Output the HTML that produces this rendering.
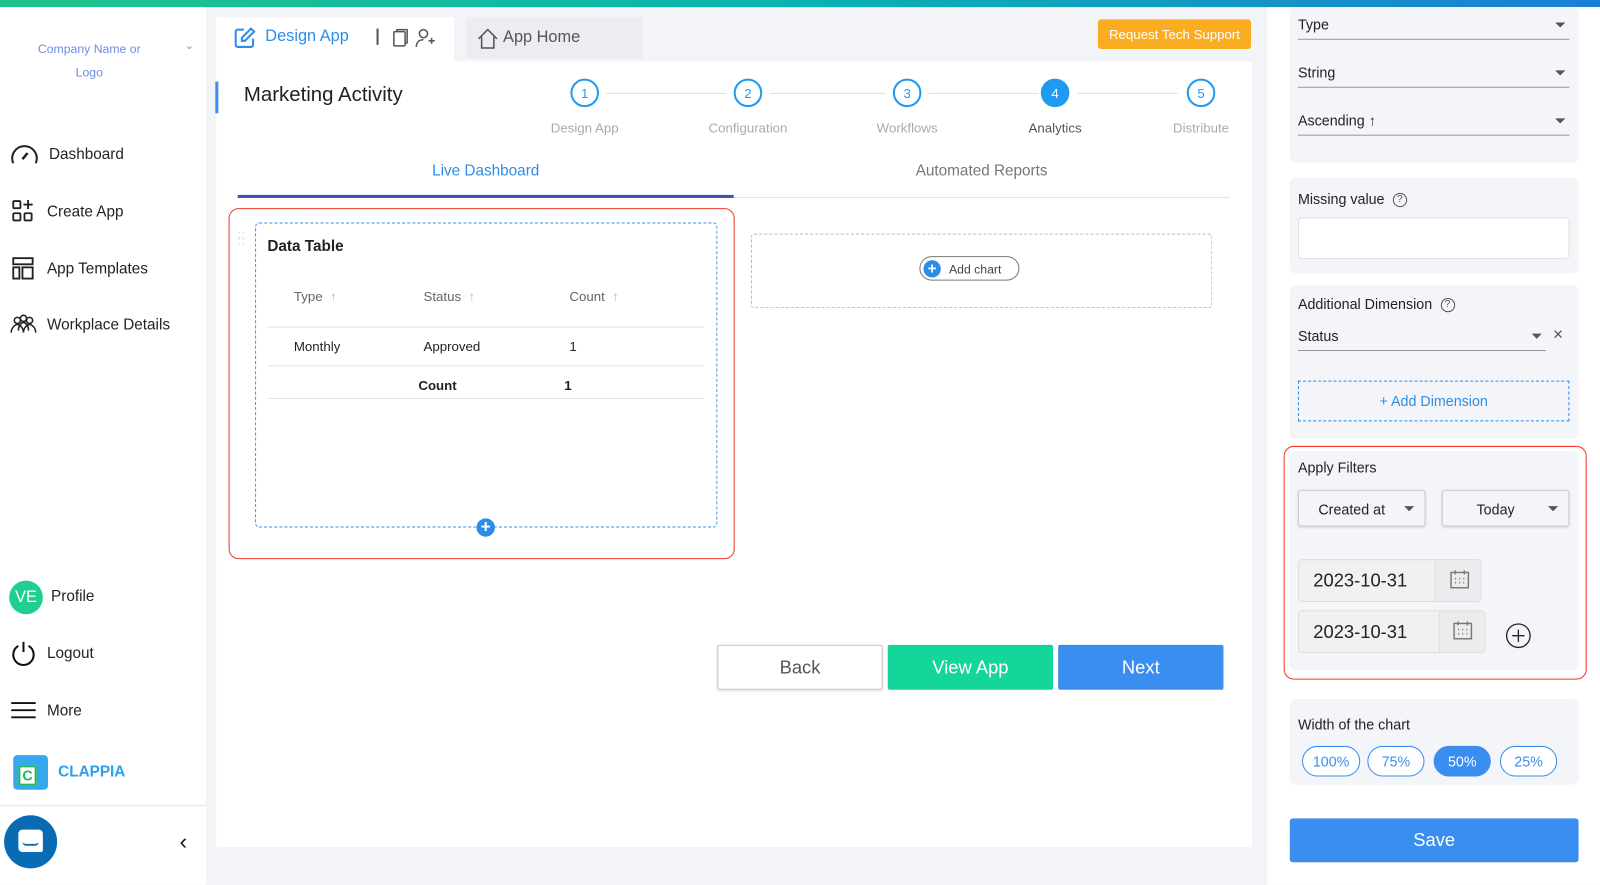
<!DOCTYPE html>
<html><head><meta charset="utf-8"><style>
*{box-sizing:border-box;margin:0;padding:0}
body{width:1600px;height:872px;overflow:hidden;font-family:"Liberation Sans",sans-serif;background:#f2f4f7;position:relative;color:#222}
#w{position:absolute;left:0;top:0;width:1568px;height:855px;transform:scale(1.020408);transform-origin:0 0}
.a{position:absolute}
.topbar{left:0;top:0;width:1568px;height:7px;background:linear-gradient(90deg,#1fc48a,#0ab3b0 50%,#1a7fd6)}
.side{left:0;top:7px;width:202px;height:860px;background:#fff}
.nav{left:10px;font-size:15px;color:#222;display:flex;align-items:center;gap:10px}
.card{left:212px;top:60px;width:1015px;height:770px;background:#fff}
.step{width:28px;height:28px;border-radius:50%;border:2px solid #1e9bf0;color:#1e9bf0;font-size:13px;display:flex;align-items:center;justify-content:center;background:#fff}
.sl{font-size:13px;color:#aaa;text-align:center;width:120px}
.line{height:1px;background:#ddd;top:91px}
.right{left:1242px;top:7px;width:326px;height:860px;background:#fff}
.sec{background:#f4f5f9;border-radius:6px;left:1264px;width:283px}
.dd{left:1272px;width:266px;border-bottom:1px solid #999;font-size:14px;height:26px;padding-top:3px}
.tri{position:absolute;right:4px;top:9px;width:0;height:0;border-left:5px solid transparent;border-right:5px solid transparent;border-top:5px solid #555}
.lbl{font-size:14px;color:#222}
.q{display:inline-block;width:14px;height:14px;border:1px solid #555;border-radius:50%;font-size:10px;text-align:center;line-height:12px;margin-left:8px;vertical-align:middle;color:#555}
.pill{top:731px;height:30px;border:1px solid #3a8ef0;border-radius:15px;color:#3a8ef0;font-size:14px;display:flex;align-items:center;justify-content:center;background:#fff}
.btn{top:632px;height:44px;width:162px;font-size:18px;display:flex;align-items:center;justify-content:center;border-radius:2px}
.date{width:180px;height:42px;background:#f1f1f1;border:1px solid #ddd;border-radius:4px;font-size:18px;padding:10px 0 0 14px}
.cal{position:absolute;right:0;top:0;width:45px;height:40px;border-left:1px solid #ddd;background:#ebecee}
</style></head><body><div id="w">
<div class="a topbar"></div>
<div class="a side"></div>
<div class="a" style="left:20px;top:37px;width:135px;text-align:center;font-size:12px;color:#6b8fe0;line-height:23px">Company Name or<br>Logo</div>
<div class="a" style="left:181px;top:38px;font-size:11px;color:#6b8fe0">&#8964;</div>
<div class="a nav" style="top:138px"><svg width="28" height="26" viewBox="0 0 28 26"><path d="M3 22A12 12 0 1 1 25 22" fill="none" stroke="#222" stroke-width="2"/><path d="M12 18l5-6" stroke="#222" stroke-width="2.5"/></svg>Dashboard</div>
<div class="a nav" style="top:195px"><svg width="26" height="24" viewBox="0 0 26 24"><rect x="3" y="2" width="7" height="7" rx="1" fill="none" stroke="#222" stroke-width="1.8"/><rect x="3" y="14" width="7" height="7" rx="1" fill="none" stroke="#222" stroke-width="1.8"/><rect x="14" y="14" width="7" height="7" rx="1" fill="none" stroke="#222" stroke-width="1.8"/><path d="M17.5 1v9M13 5.5h9" stroke="#222" stroke-width="1.8"/></svg>Create App</div>
<div class="a nav" style="top:251px"><svg width="26" height="24" viewBox="0 0 26 24"><rect x="3" y="2" width="19" height="6" fill="none" stroke="#222" stroke-width="1.8"/><rect x="3" y="11" width="6" height="11" fill="none" stroke="#222" stroke-width="1.8"/><rect x="12" y="11" width="10" height="11" fill="none" stroke="#222" stroke-width="1.8"/></svg>App Templates</div>
<div class="a nav" style="top:307px"><svg width="26" height="22" viewBox="0 0 26 22"><circle cx="7" cy="7" r="3" fill="none" stroke="#222" stroke-width="1.5"/><circle cx="13" cy="5" r="3" fill="none" stroke="#222" stroke-width="1.5"/><circle cx="19" cy="7" r="3" fill="none" stroke="#222" stroke-width="1.5"/><path d="M1 19c0-5 4-8 6-8s6 3 6 8M8 17c0-5 3-8 5-8s5 3 5 8M13 19c0-5 4-8 6-8s6 3 6 8" fill="none" stroke="#222" stroke-width="1.5"/></svg>Workplace Details</div>
<div class="a" style="left:9px;top:569px;width:33px;height:33px;border-radius:50%;background:#1fcf8f;color:#fff;font-size:16px;display:flex;align-items:center;justify-content:center">VE</div>
<div class="a" style="left:50px;top:576px;font-size:15px">Profile</div>
<div class="a nav" style="top:627px"><svg width="26" height="26" viewBox="0 0 26 26"><path d="M8 6A10 10 0 1 0 18 6" fill="none" stroke="#111" stroke-width="2"/><path d="M13 2v10" stroke="#111" stroke-width="2"/></svg>Logout</div>
<div class="a nav" style="top:685px"><svg width="26" height="22" viewBox="0 0 26 22"><path d="M1 4h24M1 11h24M1 18h24" stroke="#111" stroke-width="1.8"/></svg>More</div>
<div class="a" style="left:13px;top:740px;width:34px;height:34px;border-radius:4px;background:#35a8ee"></div>
<div class="a" style="left:18px;top:750px;width:18px;height:20px;background:#fff;border:2px solid #1fb85a;color:#1fb85a;font-weight:bold;font-size:14px;text-align:center;line-height:16px">C</div>
<div class="a" style="left:57px;top:748px;font-size:15px;font-weight:bold;color:#2aa0ee">CLAPPIA</div>
<div class="a" style="left:0;top:789px;width:202px;height:1px;background:#e6e6e6"></div>
<div class="a" style="left:4px;top:799px;width:52px;height:52px;border-radius:50%;background:#0a6bb5"></div>
<div class="a" style="left:18px;top:813px;width:24px;height:22px;background:#fff;border-radius:4px 4px 2px 4px"></div>
<div class="a" style="left:22px;top:825px;width:16px;height:4px;border-bottom:2px solid #0a6bb5;border-radius:0 0 8px 8px"></div>
<div class="a" style="left:176px;top:812px;font-size:22px;color:#111">&#8249;</div>

<div class="a" style="left:212px;top:17px;width:233px;height:43px;background:#fff"></div>
<svg class="a" style="left:229px;top:26px" width="22" height="22" viewBox="0 0 22 22"><path d="M10 3H4a2 2 0 0 0-2 2v13a2 2 0 0 0 2 2h13a2 2 0 0 0 2-2v-6" fill="none" stroke="#2b8de8" stroke-width="2"/><path d="M17 2l3 3-9 9H8v-3z" fill="none" stroke="#2b8de8" stroke-width="2"/></svg>
<div class="a" style="left:260px;top:27px;font-size:16px;color:#2b8de8">Design App</div>
<div class="a" style="left:369px;top:28px;width:2px;height:16px;background:#555"></div>
<svg class="a" style="left:383px;top:27px" width="46" height="20" viewBox="0 0 46 20"><rect x="3" y="4" width="11" height="14" rx="1" fill="none" stroke="#555" stroke-width="1.5"/><path d="M6 4V2h10v13h-2" fill="none" stroke="#555" stroke-width="1.5"/><circle cx="32" cy="6" r="4" fill="none" stroke="#555" stroke-width="1.5"/><path d="M25 19c0-5 3-7 7-7" fill="none" stroke="#555" stroke-width="1.5"/><path d="M40 10v6M37 13h6" stroke="#555" stroke-width="1.5"/></svg>
<div class="a" style="left:457px;top:17px;width:173px;height:40px;background:#ebedf1"></div>
<svg class="a" style="left:467px;top:27px" width="22" height="22" viewBox="0 0 22 22"><path d="M2 11L11 2l9 9M5 9v11h12V9" fill="none" stroke="#555" stroke-width="1.5"/></svg>
<div class="a" style="left:493px;top:28px;font-size:16px;color:#555">App Home</div>
<div class="a" style="left:1076px;top:19px;width:150px;height:29px;background:#fbad22;border-radius:3px;color:#fff;font-size:13px;display:flex;align-items:center;justify-content:center">Request Tech Support</div>

<div class="a card"></div>
<div class="a" style="left:211px;top:80px;width:3px;height:31px;background:#3a8ef0"></div>
<div class="a" style="left:239px;top:82px;font-size:20px;color:#222">Marketing Activity</div>
<div class="a line" style="left:594px;width:118px"></div>
<div class="a line" style="left:754px;width:114px"></div>
<div class="a line" style="left:910px;width:108px"></div>
<div class="a line" style="left:1056px;width:98px"></div>
<div class="a step" style="left:559px;top:77px">1</div>
<div class="a step" style="left:719px;top:77px">2</div>
<div class="a step" style="left:875px;top:77px">3</div>
<div class="a step" style="left:1020px;top:77px;background:#1e9bf0;color:#fff">4</div>
<div class="a step" style="left:1163px;top:77px">5</div>
<div class="a sl" style="left:513px;top:118px">Design App</div>
<div class="a sl" style="left:673px;top:118px">Configuration</div>
<div class="a sl" style="left:829px;top:118px">Workflows</div>
<div class="a sl" style="left:974px;top:118px;color:#555">Analytics</div>
<div class="a sl" style="left:1117px;top:118px">Distribute</div>
<div class="a" style="left:233px;top:159px;width:486px;text-align:center;font-size:15px;color:#2b8de8">Live Dashboard</div>
<div class="a" style="left:719px;top:159px;width:486px;text-align:center;font-size:15px;color:#777">Automated Reports</div>
<div class="a" style="left:233px;top:193px;width:972px;height:1px;background:#e2e2e2"></div>
<div class="a" style="left:233px;top:191px;width:486px;height:3px;background:#3f51b5"></div>

<div class="a" style="left:224px;top:204px;width:496px;height:344px;border:1.5px solid #f0392b;border-radius:10px"></div>
<div class="a" style="left:250px;top:218px;width:453px;height:299px;border:1px dashed #3a8ef0;border-radius:4px"></div>
<div class="a" style="left:233px;top:228px;font-size:10px;color:#bbb;line-height:6px;letter-spacing:1px">::<br>::</div>
<div class="a" style="left:262px;top:233px;font-size:15px;font-weight:bold">Data Table</div>
<div class="a" style="left:288px;top:283px;font-size:13px;color:#666">Type &nbsp;<span style="color:#bbb">&#8593;</span></div>
<div class="a" style="left:415px;top:283px;font-size:13px;color:#666">Status &nbsp;<span style="color:#bbb">&#8593;</span></div>
<div class="a" style="left:558px;top:283px;font-size:13px;color:#666">Count &nbsp;<span style="color:#bbb">&#8593;</span></div>
<div class="a" style="left:262px;top:320px;width:428px;height:1px;background:#e3e3e3"></div>
<div class="a" style="left:288px;top:332px;font-size:13px">Monthly</div>
<div class="a" style="left:415px;top:332px;font-size:13px">Approved</div>
<div class="a" style="left:558px;top:332px;font-size:13px">1</div>
<div class="a" style="left:262px;top:358px;width:428px;height:1px;background:#e3e3e3"></div>
<div class="a" style="left:410px;top:370px;font-size:13px;font-weight:bold">Count</div>
<div class="a" style="left:553px;top:370px;font-size:13px;font-weight:bold">1</div>
<div class="a" style="left:262px;top:390px;width:428px;height:1px;background:#e3e3e3"></div>
<div class="a" style="left:467px;top:508px;width:18px;height:18px;border-radius:50%;background:#2b8de8;color:#fff;font-size:17px;font-weight:bold;line-height:18px;text-align:center">+</div>

<div class="a" style="left:736px;top:229px;width:452px;height:73px;border:1px dashed #bbb;border-radius:3px"></div>
<div class="a" style="left:901px;top:251px;width:98px;height:24px;border:1px solid #777;border-radius:12px;font-size:12px;color:#444;padding:5px 0 0 28px">Add chart</div>
<div class="a" style="left:905px;top:255px;width:17px;height:17px;border-radius:50%;background:#2b8de8;color:#fff;font-size:15px;font-weight:bold;line-height:17px;text-align:center">+</div>

<div class="a btn" style="left:703px;background:#fff;border:1px solid #ccc;color:#555;box-shadow:0 1px 2px rgba(0,0,0,.15)">Back</div>
<div class="a btn" style="left:870px;background:#14d59a;color:#fff">View App</div>
<div class="a btn" style="left:1037px;background:#3a8ef0;color:#fff">Next</div>

<div class="a right"></div>
<div class="a sec" style="top:7px;height:153px"></div>
<div class="a dd" style="top:13px">Type<span class="tri"></span></div>
<div class="a dd" style="top:60px">String<span class="tri"></span></div>
<div class="a dd" style="top:107px">Ascending &#8593;<span class="tri"></span></div>
<div class="a sec" style="top:174px;height:94px"></div>
<div class="a lbl" style="left:1272px;top:187px">Missing value<span class="q">?</span></div>
<div class="a" style="left:1272px;top:213px;width:266px;height:41px;background:#fff;border:1px solid #e0e0e0;border-radius:4px"></div>
<div class="a sec" style="top:279px;height:151px"></div>
<div class="a lbl" style="left:1272px;top:290px">Additional Dimension<span class="q">?</span></div>
<div class="a dd" style="top:318px;width:243px">Status<span class="tri"></span></div>
<div class="a" style="left:1522px;top:318px;font-size:17px;color:#555">&#215;</div>
<div class="a" style="left:1272px;top:373px;width:266px;height:40px;border:1.5px dashed #2b8de8;color:#2b8de8;font-size:14px;text-align:center;line-height:38px">+ Add Dimension</div>
<div class="a sec" style="top:442px;height:215px"></div>
<div class="a" style="left:1258px;top:437px;width:297px;height:229px;border:1.5px solid #f0392b;border-radius:10px"></div>
<div class="a lbl" style="left:1272px;top:450px">Apply Filters</div>
<div class="a" style="left:1272px;top:480px;width:125px;height:36px;background:#f4f5f9;border:1px solid #ccc;border-radius:3px;box-shadow:0 1px 2px rgba(0,0,0,.1);font-size:14px;padding:10px 0 0 19px">Created at<span class="tri" style="right:10px;top:15px"></span></div>
<div class="a" style="left:1413px;top:480px;width:125px;height:36px;background:#f4f5f9;border:1px solid #ccc;border-radius:3px;box-shadow:0 1px 2px rgba(0,0,0,.1);font-size:14px;padding:10px 0 0 33px">Today<span class="tri" style="right:10px;top:15px"></span></div>
<div class="a date" style="left:1272px;top:548px">2023-10-31<div class="cal"></div></div>
<div class="a date" style="left:1272px;top:598px;width:184px">2023-10-31<div class="cal"></div></div>
<svg class="a" style="left:1420px;top:557px" width="22" height="22" viewBox="0 0 22 22"><rect x="2" y="4" width="17" height="15" fill="none" stroke="#777" stroke-width="1.4"/><path d="M6 2v4M15 2v4" stroke="#777" stroke-width="1.4"/><path d="M6 10h1M10 10h1M14 10h1M6 14h1M10 14h1M14 14h1" stroke="#777" stroke-width="1.6"/></svg>
<svg class="a" style="left:1423px;top:607px" width="22" height="22" viewBox="0 0 22 22"><rect x="2" y="4" width="17" height="15" fill="none" stroke="#777" stroke-width="1.4"/><path d="M6 2v4M15 2v4" stroke="#777" stroke-width="1.4"/><path d="M6 10h1M10 10h1M14 10h1M6 14h1M10 14h1M14 14h1" stroke="#777" stroke-width="1.6"/></svg>
<svg class="a" style="left:1475px;top:610px" width="26" height="26" viewBox="0 0 26 26"><circle cx="13" cy="13" r="11.5" fill="none" stroke="#222" stroke-width="1.3"/><path d="M13 7v12M7 13h12" stroke="#222" stroke-width="1.3"/></svg>
<div class="a sec" style="top:685px;height:84px"></div>
<div class="a lbl" style="left:1272px;top:702px">Width of the chart</div>
<div class="a pill" style="left:1276px;width:57px">100%</div>
<div class="a pill" style="left:1340px;width:56px">75%</div>
<div class="a pill" style="left:1405px;width:56px;background:#3a8ef0;color:#fff">50%</div>
<div class="a pill" style="left:1470px;width:56px">25%</div>
<div class="a" style="left:1264px;top:802px;width:283px;height:43px;background:#3a8ef0;border-radius:3px;color:#fff;font-size:18px;text-align:center;line-height:43px">Save</div>
</div></body></html>
